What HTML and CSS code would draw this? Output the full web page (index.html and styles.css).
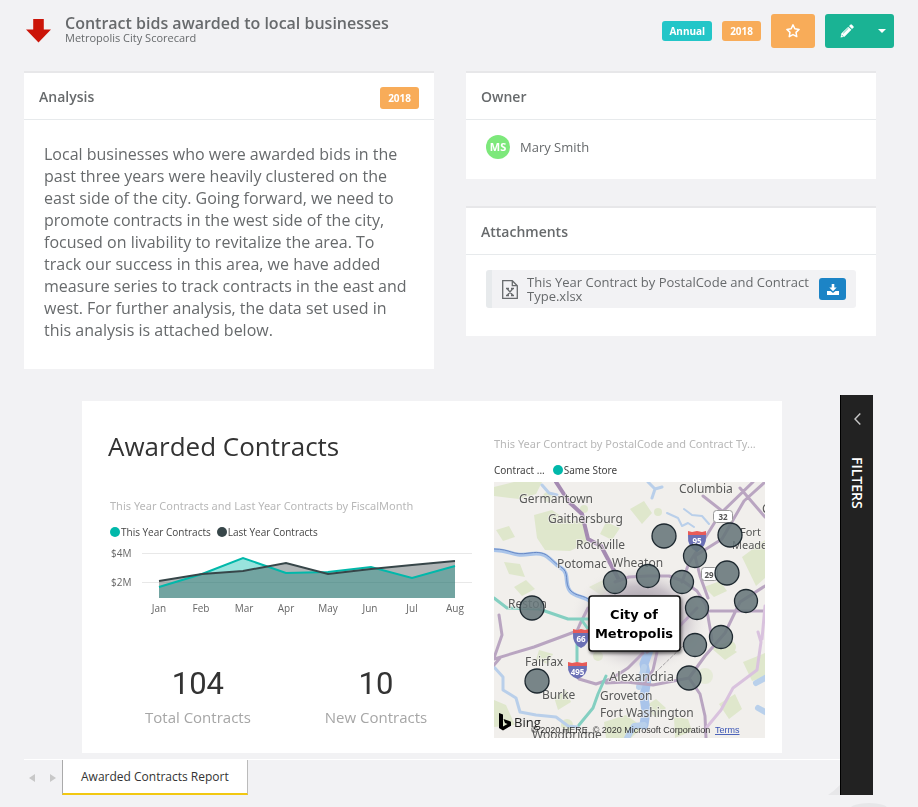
FILE: index.html
```html
<!DOCTYPE html>
<html lang="en">
<head>
<meta charset="utf-8">
<meta name="viewport" content="width=device-width, initial-scale=1">
<title>Contract bids awarded to local businesses</title>
<link rel="stylesheet" href="styles.css">
</head>
<body>
<header class="page-header">
  <svg class="trend" viewBox="0 0 26 26" aria-hidden="true"><path fill="#cb1509" d="M7.500 1h11v11H26L13 25.500 0 12h7.500z"/></svg>
  <div class="titles">
    <h1>Contract bids awarded to local businesses</h1>
    <p>Metropolis City Scorecard</p>
  </div>
  <div class="actions">
    <span class="badge badge-teal">Annual</span>
    <span class="badge">2018</span>
    <button class="btn btn-star" type="button" aria-label="Favorite">
      <svg width="14" height="14" viewBox="0 0 14 14"><path fill="none" stroke="#fff" stroke-width="1.500" stroke-linejoin="round" d="M7 .9l1.850 3.900 4.250.600-3.100 3 .750 4.200L7 10.600 3.250 12.600l.750-4.200L.9 5.400l4.250-.600z"/></svg>
    </button>
    <div class="btn-group">
      <button class="btn btn-edit" type="button" aria-label="Edit">
        <svg width="14" height="14" viewBox="0 0 14 14"><path fill="#fff" d="M9 2l1.300-1.300q.8-.7 1.600 0l1.500 1.500q.7.800 0 1.600L12 5.100zM8.300 2.700l3.100 3.100-6.900 7L.6 13.500l.7-3.900z"/><path stroke="#1ab394" stroke-width=".7" fill="none" d="M3.200 9.300l5.300-5.300M1.500 10.800l1.900 1.900"/></svg>
      </button>
      <button class="btn btn-more" type="button" aria-label="More actions">
        <svg width="8" height="4" viewBox="0 0 8 4"><path fill="#fff" d="M0 0h8L4 4z"/></svg>
      </button>
    </div>
  </div>
</header>

<main>
  <div class="cards">
    <section class="card">
      <div class="card-head"><h2>Analysis</h2><span class="badge badge-tall">2018</span></div>
      <p class="analysis">Local businesses who were awarded bids in the past three years were heavily clustered on the east side of the city. Going forward, we need to promote contracts in the west side of the city, focused on livability to revitalize the area. To track our success in this area, we have added measure series to track contracts in the east and west. For further analysis, the data set used in this analysis is attached below.</p>
    </section>
    <div class="side">
      <section class="card">
        <div class="card-head"><h2>Owner</h2></div>
        <div class="owner"><span class="avatar">MS</span><span>Mary Smith</span></div>
      </section>
      <section class="card">
        <div class="card-head"><h2>Attachments</h2></div>
        <div class="attachments">
          <div class="file">
            <svg width="16" height="19" viewBox="0 0 16 19" aria-hidden="true"><path fill="none" stroke="#676a6c" stroke-width="1.300" d="M.7.700h9.600l5 5v12.600H.7zM10.300.700v5h5"/><path fill="none" stroke="#676a6c" stroke-width="1.300" d="M5 8.500l6 7M10.800 8.500l-5.600 7M4 8.500h3M9 8.500h3M4 15.500h3M9 15.500h3"/></svg>
            <span class="file-name">This Year Contract by PostalCode and Contract Type.xlsx</span>
            <button class="btn btn-download" type="button" aria-label="Download">
              <svg width="12" height="11" viewBox="0 0 12 11"><path fill="#fff" d="M4.700 0h2.600v3.500h2.400L6 7.200 2.300 3.500h2.400zM0 7h3.500L6 9l2.500-2H12v4H0z"/></svg>
            </button>
          </div>
        </div>
      </section>
    </div>
  </div>

  <section class="report">
    <div class="report-main">
      <div class="canvas">
        <div class="left">
          <h2 class="report-title">Awarded Contracts</h2>
          <h3 class="visual-title">This Year Contracts and Last Year Contracts by FiscalMonth</h3>
          <div class="legend">
            <span class="key"><i class="dot"></i>This Year Contracts</span>
            <span class="key"><i class="dot dot-dark"></i>Last Year Contracts</span>
          </div>
          <svg class="chart" viewBox="0 0 362 72" role="img" aria-label="Contracts by fiscal month">
            <path stroke="#e8e8e8" d="M32 8.500h330M32 37.500h330"/>
            <path fill="#01b8aa" fill-opacity=".4" d="M49 42L92 29 133 13 176 28 218 27 261 22 302 33 345 21V53H49z"/>
            <path fill="#374649" fill-opacity=".4" d="M49 36L92 29 133 26 176 18 218 29 261 24 302 20 345 16V53H49z"/>
            <path class="line" stroke="#01b8aa" d="M49 42L92 29 133 13 176 28 218 27 261 22 302 33 345 21"/>
            <path class="line" stroke="#374649" d="M49 36L92 29 133 26 176 18 218 29 261 24 302 20 345 16"/>
            <text x="1" y="12">$4M</text><text x="1" y="41">$2M</text>
            <g text-anchor="middle"><text x="49" y="67">Jan</text><text x="91" y="67">Feb</text><text x="134" y="67">Mar</text><text x="176" y="67">Apr</text><text x="218" y="67">May</text><text x="260" y="67">Jun</text><text x="302" y="67">Jul</text><text x="345" y="67">Aug</text></g>
          </svg>
          <div class="kpis">
            <div class="kpi"><strong>104</strong><span>Total Contracts</span></div>
            <div class="kpi"><strong>10</strong><span>New Contracts</span></div>
          </div>
        </div>
        <div class="right">
          <h3 class="visual-title">This Year Contract by PostalCode and Contract Ty...</h3>
          <div class="legend"><span class="key">Contract ...</span><span class="key"><i class="dot"></i>Same Store</span></div>
          <svg class="map" viewBox="0 0 271 256" role="img" aria-label="Map of contracts around City of Metropolis">
            <defs>
              <radialGradient id="city"><stop offset="0" stop-color="#8e8791"/><stop offset=".6" stop-color="#c6bfc6"/><stop offset="1" stop-color="#f0eeeb" stop-opacity="0"/></radialGradient>
              <filter id="shade" x="-10%" y="-10%" width="125%" height="130%"><feDropShadow dx="1" dy="2" stdDeviation="1.500" flood-opacity=".5"/></filter>
            </defs>
            <rect width="271" height="256" fill="#f1efec"/>
            <g fill="#dfe7cc">
              <path d="M0 5l20-5h28l-6 12-17 5-25-3zM40 33l18-5 13 9 19 4 3 20-17 8-25-1-8-12zM136 27l14-8 8 12-10 11zM112 40l14 6-8 12-12-6zM248 75l23-17v38l-9 8zM2 48l13-4 6 11-12 4zM210 105l16-6 7 10-13 6zM216 165l15-4 12 9-12 8zM225 222l16-10 7 15-13 10zM60 215l12-7 5 12-13 8zM110 240l22-7 17 12-12 11h-25zM0 218l12 5 9 20-21 2zM20 105l12-7 9 9-13 7zM180 235l14 2 4 12-17 7zM249 180l22-9v24l-13 4zM95 105l14-7 8 8-9 8zM10 80l16 2 5 13-16-3zM150 225l12-8 10 9-10 10zM45 168l14 4-5 10-12-4z"/>
              <circle cx="54" cy="15" r="5"/><circle cx="164" cy="30" r="4"/><circle cx="90" cy="27" r="4"/><circle cx="211" cy="194" r="8" opacity=".6"/><circle cx="236" cy="165" r="6"/><circle cx="104" cy="174" r="5"/><circle cx="73" cy="243" r="6"/>
            </g>
            <ellipse cx="146" cy="137" rx="70" ry="55" fill="url(#city)"/>
            <g fill="none" stroke-linejoin="round" stroke-linecap="round">
              <path stroke="#b9cfea" stroke-width="3" d="M48 3l7 8 8 2M154 0l7 7-3 9M161 7l7-2M0 185l9 10 0 13 13 8 4 14 16 3 20 2 12 9 10 1"/>
              <path stroke="#b9cfea" stroke-width="2" d="M190 27l8 6 10 1 7 8M173 31l11 5 4 8 6-3 6 4"/>
              <path stroke="#a9c4ea" stroke-width="4" d="M0 68c18 0 17 7 36 4s19 7 31 14c9 5 3 16 9 23s13 4 21 11"/>
              <path stroke="#6888c4" stroke-width="1" d="M0 67c18 0 17 7 36 4s19 7 31 14c9 5 3 16 9 23s13 4 21 11"/>
              <path stroke="#a9c4ea" stroke-width="9" d="M155 168l-5 14 3 15-3 18 2 14-2 14"/>
              <path stroke="#b9d0eb" stroke-width="6" d="M150 243l-10 1-7 12M150 185l-5 20M262 201l9-5M264 226l7 4"/>
              <path stroke="#a58bb2" stroke-width="4" d="M62 0l13 20 13 12 6 25 13 7 9 17 9 17"/>
              <g stroke="#b9a5c1" stroke-width="3">
                <path d="M121 100l14-5 19-1 21 0 14 5 14 10 9 14 4 23 2 12M188 100l7-19 11-17 20-32 33-32M209 14l23 18M246 6l25 29M271 0l-21 19-22 38-27 17M201 74l5 20 8 22M94 126l-8 16-3 7M83 149l-43 16-40 12M5 133l3 20-8 23M85 197l17 5 15-5 17-11 15-15M112 201l20-1 27 3 36-7M163 170l-4 18-9 14M195 196l16-22 20-23 15-31 25-16M195 196l11 16 5 22 1 22M216 129h55M153 170l27-20 23-24M0 183l6-7"/>
              </g>
              <g stroke="#d9c2de" stroke-width="3"><path d="M264 150l3 10-4 28-24 18-12 22-14 17M271 124l-3 33"/></g>
              <g stroke="#84cfc1" stroke-width="3"><path d="M0 116l13 10 32 1 29 10h20M87 137l7 10M83 157v22M112 194l-4 9-4 9-5 14-14 17"/></g>
              <path stroke="#a6a3a5" stroke-dasharray="3 2" d="M162 190l29-28"/>
            </g>
            <g class="places">
              <text x="25" y="21">Germantown</text><text x="54" y="41">Gaithersburg</text><text x="82" y="67">Rockville</text><text x="185" y="11">Columbia</text>
              <text x="63" y="86">Potomac</text><text x="118" y="85">Wheaton</text><text x="14" y="126">Reston</text><text class="small" x="246" y="54">Fort</text><text class="small" x="238" y="67">Meade</text><text x="268" y="31">C</text>
              <text x="31" y="184">Fairfax</text><text x="48" y="217">Burke</text><text class="large" x="115" y="199">Alexandria</text><text x="106" y="218">Groveton</text><text x="106" y="235">Fort Washington</text><text x="38" y="257">Woodbridge</text>
            </g>
            <g class="shield">
              <rect x="219.500" y="28.500" width="19" height="12" rx="3" fill="#fff" stroke="#999"/><text class="dark" x="229" y="38">32</text>
              <rect x="207.500" y="85.500" width="16" height="13" rx="3" fill="#fff" stroke="#999"/><text class="dark" x="215" y="96">29</text>
              <path fill="#6b70b5" d="M194 53h18q1 12-9 17-10-5-9-17z"/><path fill="#e85b58" d="M194 49l4 1 5-1 5 1 4-1v4h-18z"/><text x="203" y="62">95</text>
              <path fill="#6b70b5" d="M79 151h16q1 11-8 15-9-4-8-15z"/><path fill="#e85b58" d="M79 147l4 1 4-1 4 1 4-1v4H79z"/><text x="87" y="160">66</text>
              <path fill="#6b70b5" d="M74 184h19q1 9-9.500 13Q73 193 74 184z"/><path fill="#e85b58" d="M74 180l4 1 5-1 5 1 5-1v4H74z"/><text x="83.500" y="193">495</text>
            </g>
            <g fill="#66767a" fill-opacity=".88" stroke="#1e2930" stroke-width="1.300">
              <circle cx="170" cy="54" r="12"/><circle cx="236" cy="53" r="12"/><circle cx="201" cy="74" r="11.500"/><circle cx="233" cy="91" r="12"/><circle cx="188" cy="100" r="11.500"/><circle cx="154" cy="94" r="11.500"/><circle cx="121" cy="100" r="11.500"/><circle cx="38" cy="126" r="12"/><circle cx="203" cy="126" r="11.500"/><circle cx="252" cy="119" r="11.500"/><circle cx="201" cy="163" r="11.500"/><circle cx="227" cy="155" r="11.500"/><circle cx="195" cy="196" r="12"/><circle cx="43" cy="199" r="12"/>
            </g>
            <rect x="95" y="114" width="91" height="55" rx="3" fill="#fff" stroke="#111" stroke-width="1.500" filter="url(#shade)"/>
            <g class="callout"><text x="140" y="137">City of</text><text x="140" y="156">Metropolis</text></g>
            <path d="M5 231l4 1.500v12l4.500-2.500-2.500-1-1.500-4 7.500 2.700v4L9 248.500 5 246z"/>
            <text class="bing" x="20" y="245">Bing</text>
            <text class="credit" x="37" y="251">© 2020 HERE, © 2020 Microsoft Corporation</text>
            <a href="#terms"><text class="credit terms" x="221" y="251">Terms</text></a>
          </svg>
        </div>
      </div>
      <nav class="tabs">
        <button class="pager" type="button" aria-label="Previous page"><svg width="6" height="8" viewBox="0 0 6 8"><path fill="#c8c8c8" d="M6 0v8L0 4z"/></svg></button>
        <button class="pager" type="button" aria-label="Next page"><svg width="6" height="8" viewBox="0 0 6 8"><path fill="#c8c8c8" d="M0 0v8l6-4z"/></svg></button>
        <button class="tab" type="button">Awarded Contracts Report</button>
      </nav>
    </div>
    <button class="filters" type="button">
      <svg width="7" height="12" viewBox="0 0 7 12" aria-hidden="true"><path fill="none" stroke="#c8c8c8" stroke-width="1.400" d="M6.300.500L1 6l5.300 5.500"/></svg>
      <span>FILTERS</span>
    </button>
  </section>
</main>
<svg class="corner" width="90" height="22" viewBox="0 0 90 22" aria-hidden="true"><path fill="#e7e7e9" d="M0 10Q6 6 12 0v10z"/><ellipse cx="41" cy="24" rx="19" ry="6" fill="#e7e7e9"/></svg>
</body>
</html>
```
FILE: styles.css
```css
* {
  box-sizing: border-box;
}

body {
  margin: 0;
  background: #f2f2f4;
  color: #676a6c;
  font-family: "Open Sans", "Noto Sans", sans-serif;
  font-size: 13px;
}

h1, h2, h3, p {
  margin: 0;
}

button {
  border: 0;
  padding: 0;
  font: inherit;
  color: inherit;
  background: none;
  cursor: pointer;
}

svg {
  display: block;
}

.page-header {
  display: flex;
  align-items: flex-start;
  padding: 14px 24px 0 26px;
  min-height: 71px;
}

.trend {
  width: 25px;
  height: 25px;
  margin-top: 4px;
}

.titles {
  flex: 1;
  padding-left: 14px;
}

.titles h1 {
  font-size: 16px;
  line-height: 18px;
  font-weight: 600;
}

.titles p {
  font-size: 11px;
  line-height: 12px;
}

.actions {
  display: flex;
  align-items: center;
  gap: 10px;
}

.badge {
  padding: 0 8px;
  border-radius: 3px;
  background: #f8ac59;
  color: #fff;
  font-size: 10px;
  font-weight: 700;
  line-height: 20px;
}

.badge-teal {
  padding: 0 7px;
  background: #23c6c8;
}

.badge-tall {
  margin-top: 4px;
  line-height: 22px;
}

.btn {
  display: flex;
  align-items: center;
  justify-content: center;
  height: 34px;
  border-radius: 3px;
}

.btn-star {
  width: 44px;
  background: #f8ac59;
}

.btn-group {
  display: flex;
  border-radius: 3px;
  background: #1ab394;
}

.btn-edit {
  width: 44px;
}

.btn-more {
  width: 25px;
}

.cards {
  display: grid;
  grid-template-columns: 1fr 1fr;
  gap: 32px;
  align-items: start;
  padding: 0 42px 0 24px;
}

.side {
  display: grid;
  gap: 27px;
}

.card {
  border-top: 2px solid #e7e7e9;
  background: #fff;
}

.card-head {
  display: flex;
  align-items: center;
  justify-content: space-between;
  height: 47px;
  padding: 0 15px;
  border-bottom: 1px solid #e7eaec;
}

.card-head h2 {
  font-size: 14px;
  font-weight: 600;
}

.analysis {
  padding: 23px 20px 28px;
  font-size: 16px;
  line-height: 22px;
}

.owner {
  display: flex;
  align-items: center;
  gap: 10px;
  padding: 15px 20px 20px;
}

.avatar {
  width: 24px;
  height: 24px;
  border-radius: 50%;
  background: #7de87b;
  color: #fff;
  font-size: 11px;
  font-weight: 700;
  line-height: 24px;
  text-align: center;
}

.attachments {
  padding: 15px 20px 28px;
}

.file {
  display: flex;
  align-items: center;
  gap: 9px;
  padding: 5px 10px;
  border-left: 6px solid #e7eaec;
  border-radius: 3px;
  background: #f2f2f4;
}

.file-name {
  flex: 1;
  line-height: 14px;
}

.btn-download {
  width: 27px;
  height: 22px;
  background: #1c84c6;
}

.report {
  display: flex;
  margin: 26px 45px 0 24px;
}

.report-main {
  flex: 1;
}

.canvas {
  display: grid;
  grid-template-columns: 362fr 271fr;
  gap: 22px;
  margin: 6px 58px;
  padding: 27px 17px 15px 28px;
  background: #fff;
}

.report-title {
  margin-left: -2px;
  color: #333;
  font-size: 26px;
  line-height: 36px;
  font-weight: 400;
}

.visual-title {
  color: #b8b8b8;
  font-family: "Noto Sans", sans-serif;
  font-size: 11px;
  line-height: 16px;
  font-weight: 400;
  white-space: nowrap;
}

.report-title + .visual-title {
  margin-top: 34px;
}

.right {
  min-width: 0;
  padding-top: 8px;
}

.legend {
  display: flex;
  gap: 6px;
  margin-top: 10px;
  color: #444;
  font-size: 10px;
  line-height: 16px;
}

.right .legend {
  gap: 8px;
  margin-bottom: 4px;
  font-family: "Noto Sans", sans-serif;
}

.key {
  display: flex;
  align-items: center;
  gap: 1px;
}

.dot {
  width: 10px;
  height: 10px;
  border-radius: 50%;
  background: #01b8aa;
}

.dot-dark {
  background: #374649;
}

.chart {
  width: 100%;
  margin-top: 5px;
  fill: #666;
  font-size: 10px;
}

.chart .line {
  fill: none;
  stroke-width: 2;
}

.kpis {
  display: flex;
  gap: 74px;
  padding: 46px 0 0 35px;
}

.kpi {
  display: grid;
  justify-items: center;
  color: #a6a6a6;
  font-size: 15px;
  line-height: 20px;
}

.kpi strong {
  margin-bottom: 2px;
  color: #333;
  font-family: Roboto, sans-serif;
  font-size: 31px;
  font-weight: 400;
  line-height: 42px;
}

.map {
  width: 100%;
}

.places {
  fill: #585858;
  font-family: "Noto Sans", sans-serif;
  font-size: 12px;
  paint-order: stroke;
  stroke: #f5f3f0;
  stroke-width: 2px;
  stroke-opacity: 0.6;
}

.places .small {
  font-size: 11px;
}

.places .large {
  font-size: 13px;
}

.shield {
  fill: #fff;
  font-size: 8px;
  font-weight: 700;
  text-anchor: middle;
}

.shield .dark {
  fill: #555;
}

.callout {
  font-family: "DejaVu Sans", sans-serif;
  font-size: 13px;
  font-weight: 700;
  text-anchor: middle;
}

.bing {
  fill: #222;
  font-size: 13px;
}

.credit {
  fill: #333;
  font-family: "Liberation Sans", Arial, sans-serif;
  font-size: 9px;
}

.terms {
  fill: #3b55b5;
  text-decoration: underline;
}

.tabs {
  display: flex;
  height: 36px;
  border-top: 1px solid #fff;
}

.pager {
  display: flex;
  align-items: center;
  justify-content: center;
  width: 16px;
}

.pager + .pager {
  width: 22px;
  padding-left: 4px;
}

.tab {
  padding: 0 18px;
  border-right: 1px solid #bbb;
  border-bottom: 2px solid #f2c811;
  border-left: 1px solid #aaa;
  background: #fff;
  color: #333;
  font-size: 12px;
}

.filters {
  display: flex;
  flex-direction: column;
  align-items: center;
  gap: 32px;
  width: 33px;
  padding-top: 18px;
  border-left: 1px solid #000;
  background: #222;
  color: #fff;
  font-size: 14px;
  font-weight: 600;
}

.filters span {
  writing-mode: vertical-rl;
}

.corner {
  position: fixed;
  right: 0;
  bottom: 0;
  z-index: -1;
}
```
